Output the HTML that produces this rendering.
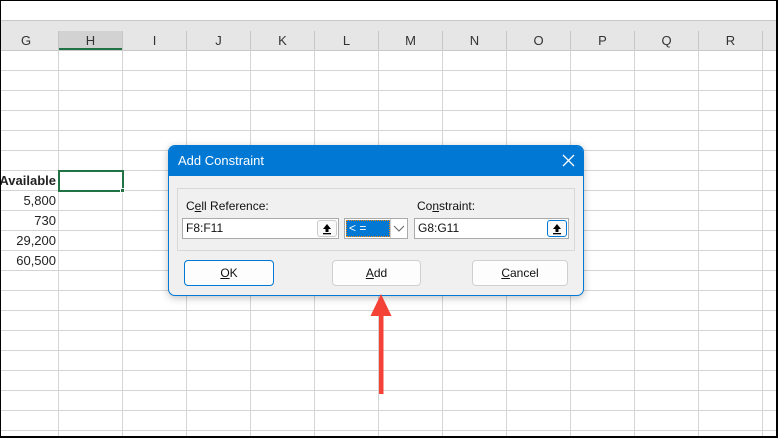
<!DOCTYPE html>
<html><head><style>
*{margin:0;padding:0;box-sizing:border-box}
body{width:778px;height:438px;overflow:hidden;background:#fff;font-family:"Liberation Sans",sans-serif;position:relative}
.a{position:absolute}
.hl{position:absolute;left:0;width:778px;height:1px;background:#d4d4d4}
.vl{position:absolute;top:50px;width:1px;height:388px;background:#d4d4d4}
.ch{position:absolute;top:31px;height:19px;font-size:13px;color:#333;text-align:center;line-height:19px;border-left:1px solid #c6c6c6}
.num{position:absolute;right:722px;font-size:13px;color:#222;line-height:20px}
.btn{position:absolute;top:260px;height:26px;background:#fdfdfd;border:1px solid #d0d0d0;border-radius:4px;font-size:12px;text-align:center;line-height:24px;color:#111}
.inp{position:absolute;top:218px;height:21px;background:#fff;border:1px solid #aaa;font-size:12px;line-height:19px;padding-left:3px;color:#111}
.up{position:absolute;top:1px;right:1px;width:20px;height:17px;border:1px solid #ccc;border-radius:3px;background:#fafafa}
</style></head><body>
<div class="a" style="left:0;top:0;width:778px;height:1px;background:#000"></div>
<div class="a" style="left:0;top:20px;width:778px;height:30px;background:#e6e6e6;border-top:1px solid #c8c8c8"></div>
<div class="a" style="left:58px;top:31px;width:64px;height:19px;background:#d2d2d2"></div>
<div class="a" style="left:58px;top:48px;width:64px;height:2px;background:#217346"></div>
<div class="ch" style="left:-6px;width:64px;border:none">G</div>
<div class="ch" style="left:58px;width:64px">H</div>
<div class="ch" style="left:122px;width:64px">I</div>
<div class="ch" style="left:186px;width:64px">J</div>
<div class="ch" style="left:250px;width:64px">K</div>
<div class="ch" style="left:314px;width:64px">L</div>
<div class="ch" style="left:378px;width:64px">M</div>
<div class="ch" style="left:442px;width:64px">N</div>
<div class="ch" style="left:506px;width:64px">O</div>
<div class="ch" style="left:570px;width:64px">P</div>
<div class="ch" style="left:634px;width:64px">Q</div>
<div class="ch" style="left:698px;width:64px">R</div>
<div class="ch" style="left:762px;width:16px"></div>
<div class="a" style="left:0;top:50px;width:778px;height:1px;background:#c8c8c8"></div>
<div class="hl" style="top:70px"></div><div class="hl" style="top:90px"></div><div class="hl" style="top:110px"></div><div class="hl" style="top:130px"></div><div class="hl" style="top:150px"></div><div class="hl" style="top:170px"></div><div class="hl" style="top:190px"></div><div class="hl" style="top:210px"></div><div class="hl" style="top:230px"></div><div class="hl" style="top:250px"></div><div class="hl" style="top:270px"></div><div class="hl" style="top:290px"></div><div class="hl" style="top:310px"></div><div class="hl" style="top:330px"></div><div class="hl" style="top:350px"></div><div class="hl" style="top:370px"></div><div class="hl" style="top:390px"></div><div class="hl" style="top:410px"></div><div class="hl" style="top:430px"></div>
<div class="vl" style="left:58px"></div><div class="vl" style="left:122px"></div><div class="vl" style="left:186px"></div><div class="vl" style="left:250px"></div><div class="vl" style="left:314px"></div><div class="vl" style="left:378px"></div><div class="vl" style="left:442px"></div><div class="vl" style="left:506px"></div><div class="vl" style="left:570px"></div><div class="vl" style="left:634px"></div><div class="vl" style="left:698px"></div><div class="vl" style="left:762px"></div>
<div class="num" style="top:171px;font-weight:bold">Available</div>
<div class="num" style="top:191px">5,800</div>
<div class="num" style="top:211px">730</div>
<div class="num" style="top:231px">29,200</div>
<div class="num" style="top:251px">60,500</div>
<div class="a" style="left:58px;top:170px;width:66px;height:22px;border:2px solid #217346"></div>
<div class="a" style="left:120px;top:188px;width:5px;height:5px;background:#217346;border:1px solid #fff"></div>
<div class="a" style="left:0;top:0;width:1px;height:438px;background:#000"></div>
<div class="a" style="left:776px;top:0;width:2px;height:438px;background:#000"></div>
<div class="a" style="left:0;top:436px;width:778px;height:2px;background:#000"></div>

<div class="a" style="left:168px;top:145px;width:416px;height:151px;background:#f0f0f0;border:1px solid #0078d4;border-radius:7px;overflow:hidden;box-shadow:0 2px 8px rgba(0,0,0,.25)">
<div class="a" style="left:0;top:0;width:416px;height:30px;background:#0078d4;color:#fff;font-size:13px;line-height:30px;padding-left:9px">Add Constraint</div>
<svg class="a" style="left:393px;top:8px" width="13" height="13"><path d="M1 1L12 12M12 1L1 12" stroke="#fff" stroke-width="1.3"/></svg>
</div>
<div class="a" style="left:177px;top:188px;width:398px;height:63px;border:1px solid #d8d8d8"></div>
<div class="a" style="left:186px;top:199px;font-size:12px;color:#111">C<u>e</u>ll Reference:</div>
<div class="a" style="left:417px;top:199px;font-size:12px;color:#111">Co<u>n</u>straint:</div>
<div class="inp" style="left:182px;width:157px">F8:F11<div class="up"><svg width="18" height="15"><path d="M9 3L5 8H7.5V11H10.5V8H13Z" fill="#000"/><rect x="5" y="12" width="8" height="1.3" fill="#000"/></svg></div></div>
<div class="a" style="left:344px;top:218px;width:64px;height:21px;background:#fff;border:1px solid #aaa"></div>
<div class="a" style="left:346px;top:220px;width:44px;height:17px;background:#0078d4;border:1px dotted #f80;color:#fff;font-size:12px;line-height:15px;padding-left:2px">&lt; =</div>
<div class="a" style="left:390px;top:219px;width:17px;height:19px;border-left:1px solid #ccc"></div>
<svg class="a" style="left:393px;top:225px" width="12" height="8"><path d="M1 1L6 6L11 1" stroke="#666" fill="none"/></svg>
<div class="inp" style="left:414px;width:155px">G8:G11<div class="up" style="border:1.5px solid #0078d4"><svg width="18" height="15"><path d="M9 3L5 8H7.5V11H10.5V8H13Z" fill="#000"/><rect x="5" y="12" width="8" height="1.3" fill="#000"/></svg></div></div>
<div class="btn" style="left:184px;width:90px;border:1.5px solid #0078d4"><u>O</u>K</div>
<div class="btn" style="left:332px;width:89px"><u>A</u>dd</div>
<div class="btn" style="left:472px;width:96px"><u>C</u>ancel</div>

<svg class="a" style="left:370px;top:292px" width="24" height="104"><path d="M11 2L21.5 24H0.5Z" fill="#f44336"/><rect x="9" y="22" width="4.5" height="80" fill="#f44336"/></svg>
</body></html>
